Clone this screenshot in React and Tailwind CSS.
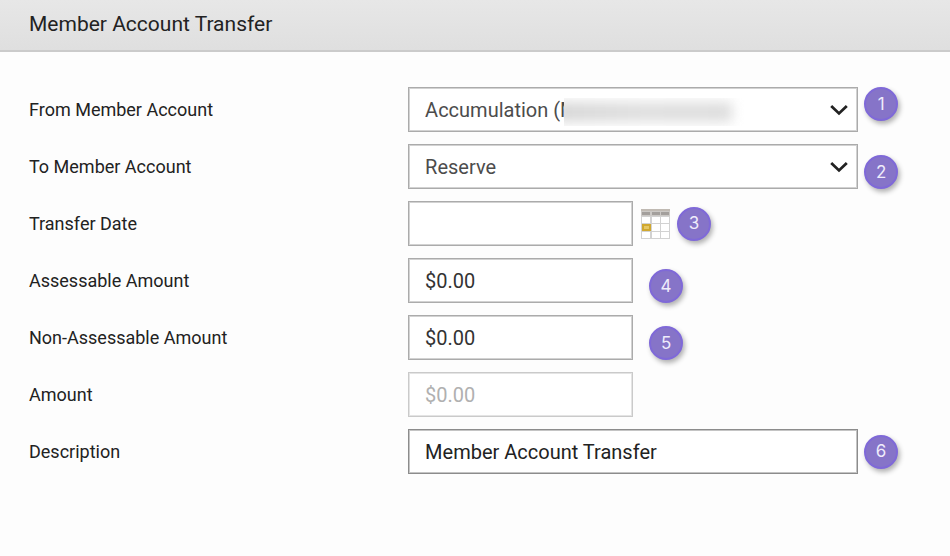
import React, {useState} from "react";

const alignments = {
  start: 'self-start',
  center: 'self-center',
  end: 'self-end',
};

const fieldBase = "h-[45px] border bg-white px-4 text-[20px]";
const borderNormal = "border-[#ababab] shadow-[inset_0_0_0_1px_#d2d2d2]";

function Badge({number, align = 'center', className = ''}){
  return (
    <span className={`flex size-[34px] shrink-0 items-center justify-center rounded-full border-2 border-[#7f69d8] bg-[#8674c8] font-['Inter',sans-serif] text-[17px] leading-none text-[#efecfb] shadow-[2px_3px_5px_rgba(0,0,0,0.3)] ${alignments[align]} ${className}`}>
      {number}
    </span>
  );
}

function Row({id, label, children}){
  return (
    <div className="flex items-center">
      <label htmlFor={id} className="w-[42.5%] shrink-0 text-[18px] leading-6 text-[#222]">{label}</label>
      {children}
    </div>
  );
}

function SelectField({id, value, onChange, options, children}){
  return (
    <div className="relative max-w-[450px] flex-1">
      <select id={id} value={value} onChange={(e)=>onChange(e.target.value)} className={`${fieldBase} ${borderNormal} block w-full appearance-none text-[#4c4c4c]`}>
        {options.map((o)=>(<option key={o} value={o}>{o}</option>))}
      </select>
      {children}
      <svg viewBox="0 0 18 12" className="pointer-events-none absolute top-[17px] right-[10px] h-3 w-[18px]" fill="none" stroke="#222" strokeWidth="2.8" aria-hidden="true">
        <path d="M1.2 2 L9 9.4 L16.8 2" />
      </svg>
    </div>
  );
}

function CalendarIcon(){
  return (
    <svg viewBox="0 0 30 32" className="h-8 w-[30px]" aria-hidden="true">
      <rect x="0" y="1" width="29" height="30" fill="#d2d2d2" />
      <rect x="0" y="1" width="29" height="2" fill="#c0bab3" />
      <rect x="0" y="3" width="29" height="5" fill="#cbc8c5" />
      {[1, 11, 20].map((x)=>(
        <g key={x}>
          <rect x={x} y="4" width="8" height="3" fill="#a39f9c" />
          <rect x={x} y="9" width="8" height="6" fill="#fff" />
          <rect x={x} y="16" width="8" height="7" fill="#fff" />
          <rect x={x} y="24" width="8" height="6" fill="#fff" />
        </g>
      ))}
      <rect x="1" y="16" width="9" height="7" fill="#d0a830" />
      <rect x="3" y="18" width="5" height="3" fill="#e6c866" />
    </svg>
  );
}

export default function App(){
  const [from, setFrom] = useState('Accumulation (M');
  const [to, setTo] = useState('Reserve');
  const [date, setDate] = useState('');
  const [assessable, setAssessable] = useState('$0.00');
  const [nonAssessable, setNonAssessable] = useState('$0.00');
  const [description, setDescription] = useState('Member Account Transfer');

  return (
    <div className="min-h-screen bg-[#fdfdfd] font-['Roboto',sans-serif]">
      <header className="border-b-2 border-[#cbcbcb] bg-linear-to-b from-[#e7e7e7] to-[#dfdfdf] px-[29px] pt-[9px] pb-[11px]">
        <h1 className="text-[21px] leading-[30px] text-[#222]">Member Account Transfer</h1>
      </header>

      <form className="flex flex-col gap-3 px-[29px] py-[35px]">
        <Row id="from" label="From Member Account">
          <SelectField id="from" value={from} onChange={setFrom} options={['Accumulation (M', 'Reserve']}>
            {/* account holder's name is hidden */}
            <div className="pointer-events-none absolute top-[11px] left-[156px] h-7 w-[180px] overflow-hidden bg-white">
              <div className="-ml-2 mt-1 h-5 w-[176px] bg-linear-to-r from-[#d8d8d8] via-[#e0e0e0] to-[#dedede] blur-[6px]" />
            </div>
          </SelectField>
          <Badge number={1} align="start" className="ml-[6px]" />
        </Row>

        <Row id="to" label="To Member Account">
          <SelectField id="to" value={to} onChange={setTo} options={['Reserve', 'Accumulation']} />
          <Badge number={2} align="end" className="ml-[6px]" />
        </Row>

        <Row id="date" label="Transfer Date">
          <input id="date" type="text" value={date} onChange={(e)=>setDate(e.target.value)} className={`${fieldBase} ${borderNormal} w-[225px] text-[#333]`} />
          <button type="button" aria-label="Pick a date" className="ml-2 shrink-0"><CalendarIcon /></button>
          <Badge number={3} className="ml-[6px]" />
        </Row>

        <Row id="assessable" label="Assessable Amount">
          <input id="assessable" type="text" value={assessable} onChange={(e)=>setAssessable(e.target.value)} className={`${fieldBase} ${borderNormal} w-[225px] text-[#333]`} />
          <Badge number={4} align="end" className="ml-4" />
        </Row>

        <Row id="nonAssessable" label="Non-Assessable Amount">
          <input id="nonAssessable" type="text" value={nonAssessable} onChange={(e)=>setNonAssessable(e.target.value)} className={`${fieldBase} ${borderNormal} w-[225px] text-[#333]`} />
          <Badge number={5} align="end" className="ml-4" />
        </Row>

        <Row id="amount" label="Amount">
          <input id="amount" type="text" value="$0.00" disabled className={`${fieldBase} w-[225px] border-[#cacaca] text-[#b0b0b0] shadow-[inset_0_0_0_1px_#e4e4e4]`} />
        </Row>

        <Row id="description" label="Description">
          <input id="description" type="text" value={description} onChange={(e)=>setDescription(e.target.value)} className={`${fieldBase} min-w-0 max-w-[450px] flex-1 border-[#8c8c8c] text-[#222] shadow-[inset_0_0_0_1px_#c4c4c4]`} />
          <Badge number={6} className="ml-[6px]" />
        </Row>
      </form>
    </div>
  );
}
